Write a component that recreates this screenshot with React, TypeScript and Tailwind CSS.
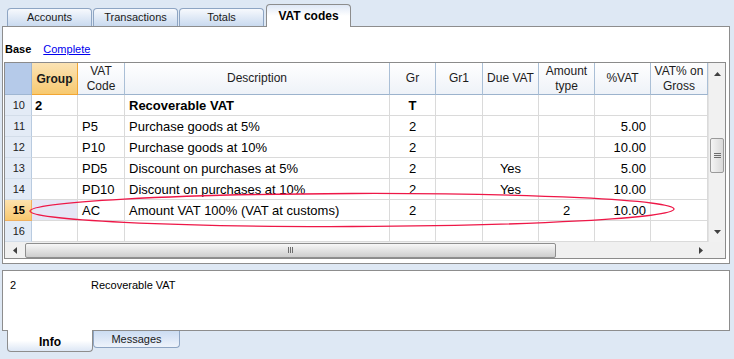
import React from "react";

const cols = "grid grid-cols-[27px_46px_47px_265px_46px_47px_56px_56px_56px_57px]";

type Row = {
  n: string;
  g?: string;
  c?: string;
  d?: string;
  gr?: string;
  gr1?: string;
  due?: string;
  at?: string;
  vat?: string;
  bold?: boolean;
  sel?: boolean;
};

const rows: Row[] = [
  { n: "10", g: "2", d: "Recoverable VAT", gr: "T", bold: true },
  { n: "11", c: "P5", d: "Purchase goods at 5%", gr: "2", vat: "5.00" },
  { n: "12", c: "P10", d: "Purchase goods at 10%", gr: "2", vat: "10.00" },
  { n: "13", c: "PD5", d: "Discount on purchases at 5%", gr: "2", due: "Yes", vat: "5.00" },
  { n: "14", c: "PD10", d: "Discount on purchases at 10%", gr: "2", due: "Yes", vat: "10.00" },
  { n: "15", c: "AC", d: "Amount VAT 100% (VAT at customs)", gr: "2", at: "2", vat: "10.00", sel: true },
  { n: "16" },
];

function Tab({ label }: { label: string }) {
  return (
    <div className="w-[85px] h-[18px] border border-b-0 border-[#8ea5c3] rounded-t-[4px] bg-gradient-to-b from-[#f7f9fd] to-[#c9daef] flex items-center justify-center text-[11px] text-[#1a1a1a]">
      {label}
    </div>
  );
}

const cell = "border-r border-b border-[#dadada] h-[21px] flex items-center text-[13px] leading-[15px] text-black whitespace-nowrap overflow-hidden";
const head =
  "border-r border-b border-r-[#aabfd6] border-b-[#9cb3cd] bg-gradient-to-b from-white to-[#eef2f8] flex items-center justify-center text-center text-[12px] leading-[15px] text-[#1c1c1c]";

export default function App() {
  return (
    <div className="w-[734px] h-[359px] bg-[#dee8f4] relative overflow-hidden font-['Liberation_Sans',Arial,sans-serif]">
      {/* top tabs */}
      <div className="flex items-end h-[26px] pl-[7px] gap-[1px]">
        <Tab label="Accounts" />
        <Tab label="Transactions" />
        <Tab label="Totals" />
        <div className="ml-[1px] w-[85px] h-[23px] -mb-[1px] relative z-10 border border-b-0 border-[#8d8d8d] rounded-t-[4px] bg-gradient-to-b from-[#dfe8f6] via-white to-white flex items-center justify-center text-[12px] font-bold text-black">
          VAT codes
        </div>
      </div>

      {/* main panel */}
      <div className="ml-[2px] w-[728px] h-[238px] border border-[#8d8d8d] bg-white pl-[1px] pr-[2px]">
        <div className="h-[35px] flex items-center pt-[9px] pl-[1px] text-[11px]">
          <span className="font-bold text-black">Base</span>
          <span className="ml-[12px] text-[#0000ee] underline">Complete</span>
        </div>

        {/* grid */}
        <div className="w-[722px] h-[197px] border border-[#8b8b8b] flex flex-col">
          <div className="flex h-[179px]">
            <div className="w-[703px] flex flex-col">
              {/* header */}
              <div className={`${cols} h-[32px]`}>
                <div className="bg-[#b5cae9] border-r border-b border-[#9fb6d2]" />
                <div className="bg-gradient-to-b from-[#fbe3b4] to-[#f7c96f] border-r border-b border-[#f2a633] flex items-center justify-center text-[12px] font-bold text-[#1a1a1a]">
                  Group
                </div>
                <div className={head}>
                  VAT
                  <br />
                  Code
                </div>
                <div className={head}>Description</div>
                <div className={head}>Gr</div>
                <div className={head}>Gr1</div>
                <div className={head}>Due VAT</div>
                <div className={head}>
                  Amount
                  <br />
                  type
                </div>
                <div className={head}>%VAT</div>
                <div className={head}>
                  VAT% on
                  <br />
                  Gross
                </div>
              </div>
              {/* rows */}
              {rows.map((r) => (
                <div key={r.n} className={cols}>
                  <div
                    className={`h-[21px] border-r border-b flex items-center justify-end pr-[6px] text-[11px] ${
                      r.sel
                        ? "bg-gradient-to-b from-[#fde2ad] to-[#f8c86e] border-[#efb060] font-bold text-black"
                        : "bg-[#e3ebf6] border-r-[#b9cbe0] border-b-[#d3dde9] text-[#222]"
                    }`}
                  >
                    {r.n}
                  </div>
                  <div className={`${cell} pl-[3px] font-bold ${r.sel ? "bg-[#e6e6f6]" : ""}`}>{r.g}</div>
                  <div className={`${cell} pl-[4px]`}>{r.c}</div>
                  <div className={`${cell} pl-[4px] ${r.bold ? "font-bold" : ""}`}>{r.d}</div>
                  <div className={`${cell} justify-center ${r.bold ? "font-bold" : ""}`}>{r.gr}</div>
                  <div className={cell}>{r.gr1}</div>
                  <div className={`${cell} justify-center`}>{r.due}</div>
                  <div className={`${cell} justify-center`}>{r.at}</div>
                  <div className={`${cell} justify-end pr-[4px]`}>{r.vat}</div>
                  <div className={cell} />
                </div>
              ))}
            </div>
            {/* vertical scrollbar */}
            <div className="w-[17px] bg-[#f1f1f1] flex flex-col border-l border-[#e2e2e2]">
              <div className="h-[22px] flex items-center justify-center">
                <svg width="7" height="4" viewBox="0 0 7 4">
                  <path d="M0 4 L3.5 0 L7 4 Z" fill="#404040" />
                </svg>
              </div>
              <div className="h-[53px]" />
              <div className="mx-[1px] h-[35px] rounded-[2px] border border-[#9a9a9a] bg-gradient-to-r from-[#f4f4f4] to-[#d9d9d9] flex flex-col items-center justify-center gap-[1px]">
                <div className="w-[7px] h-[1px] bg-[#6d6d6d]" />
                <div className="w-[7px] h-[1px] bg-[#6d6d6d]" />
                <div className="w-[7px] h-[1px] bg-[#6d6d6d]" />
              </div>
              <div className="flex-1" />
              <div className="h-[20px] flex items-center justify-center">
                <svg width="7" height="4" viewBox="0 0 7 4">
                  <path d="M0 0 L3.5 4 L7 0 Z" fill="#404040" />
                </svg>
              </div>
            </div>
          </div>
          {/* horizontal scrollbar */}
          <div className="flex h-[16px]">
            <div className="w-[703px] bg-[#f0f0f0] flex items-center">
              <div className="w-[20px] flex items-center justify-center">
                <svg width="4" height="7" viewBox="0 0 4 7">
                  <path d="M4 0 L0 3.5 L4 7 Z" fill="#404040" />
                </svg>
              </div>
              <div className="w-[531px] h-[15px] rounded-[2px] border border-[#8e8e8e] bg-gradient-to-b from-[#f7f7f7] to-[#cdcdcd] flex items-center justify-center gap-[1px]">
                <div className="w-[1px] h-[6px] bg-[#6d6d6d]" />
                <div className="w-[1px] h-[6px] bg-[#6d6d6d]" />
                <div className="w-[1px] h-[6px] bg-[#6d6d6d]" />
              </div>
              <div className="flex-1" />
              <div className="w-[14px] flex items-center justify-center">
                <svg width="4" height="7" viewBox="0 0 4 7">
                  <path d="M0 0 L4 3.5 L0 7 Z" fill="#404040" />
                </svg>
              </div>
            </div>
            <div className="w-[17px] bg-[#f0f0f0]" />
          </div>
        </div>
      </div>

      {/* info box */}
      <div className="mt-[6px] ml-[2px] w-[728px] h-[61px] border border-[#8d8d8d] bg-white flex pt-[7px] text-[11px] leading-[14px] text-black">
        <span className="w-[87px] pl-[7px]">2</span>
        <span className="ml-[1px]">Recoverable VAT</span>
      </div>

      {/* bottom tabs */}
      <div className="flex items-start -mt-[1px] pl-[7px]">
        <div className="w-[86px] h-[22px] relative z-10 border border-t-0 border-[#8d8d8d] rounded-b-[4px] bg-gradient-to-b from-white via-white to-[#dde7f5] flex items-center justify-center pt-[3px] text-[12px] font-bold text-black">
          Info
        </div>
        <div className="mt-[1px] w-[87px] h-[17px] border border-t-0 border-[#8ea5c3] rounded-b-[4px] bg-gradient-to-b from-[#cbdcf2] to-[#eef3fb] flex items-center justify-center text-[11px] text-[#1a1a1a]">
          Messages
        </div>
      </div>

      {/* red ellipse annotation */}
      <svg className="absolute left-0 top-0 pointer-events-none" width="734" height="359" viewBox="0 0 734 359">
        <ellipse
          cx="352"
          cy="210"
          rx="322"
          ry="16.5"
          transform="rotate(-0.18 352 210)"
          fill="none"
          stroke="#ee1747"
          strokeWidth="1.3"
        />
      </svg>
    </div>
  );
}
